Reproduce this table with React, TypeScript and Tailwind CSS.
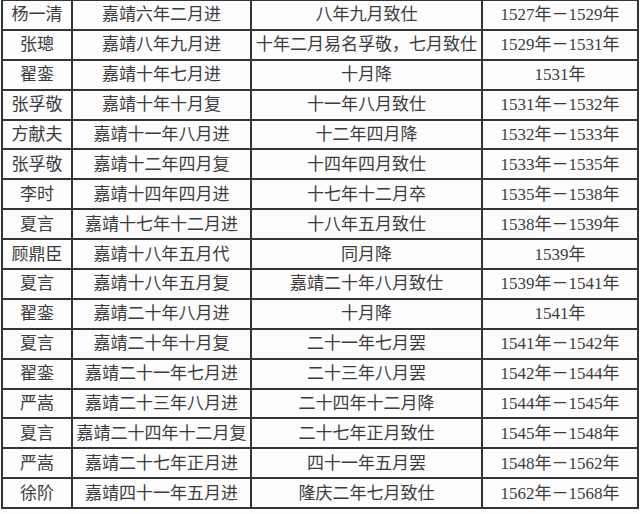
const rows: [string, string, string, string][] = [
  ['杨一清', '嘉靖六年二月进', '八年九月致仕', '1527年－1529年'],
  ['张璁', '嘉靖八年九月进', '十年二月易名孚敬，七月致仕', '1529年－1531年'],
  ['翟銮', '嘉靖十年七月进', '十月降', '1531年'],
  ['张孚敬', '嘉靖十年十月复', '十一年八月致仕', '1531年－1532年'],
  ['方献夫', '嘉靖十一年八月进', '十二年四月降', '1532年－1533年'],
  ['张孚敬', '嘉靖十二年四月复', '十四年四月致仕', '1533年－1535年'],
  ['李时', '嘉靖十四年四月进', '十七年十二月卒', '1535年－1538年'],
  ['夏言', '嘉靖十七年十二月进', '十八年五月致仕', '1538年－1539年'],
  ['顾鼎臣', '嘉靖十八年五月代', '同月降', '1539年'],
  ['夏言', '嘉靖十八年五月复', '嘉靖二十年八月致仕', '1539年－1541年'],
  ['翟銮', '嘉靖二十年八月进', '十月降', '1541年'],
  ['夏言', '嘉靖二十年十月复', '二十一年七月罢', '1541年－1542年'],
  ['翟銮', '嘉靖二十一年七月进', '二十三年八月罢', '1542年－1544年'],
  ['严嵩', '嘉靖二十三年八月进', '二十四年十二月降', '1544年－1545年'],
  ['夏言', '嘉靖二十四年十二月复', '二十七年正月致仕', '1545年－1548年'],
  ['严嵩', '嘉靖二十七年正月进', '四十一年五月罢', '1548年－1562年'],
  ['徐阶', '嘉靖四十一年五月进', '隆庆二年七月致仕', '1562年－1568年'],
]

const cell =
  'h-[29.9px] border-2 border-[#353535] p-0 text-center whitespace-nowrap'

const App = () => {
  return (
    <div className="w-[640px] h-[514px] overflow-hidden bg-[#fdfdfd]">
      <table
        className="-mt-px ml-px w-[636px] table-fixed border-collapse text-[17px] leading-none text-[#3c3c3c]"
        style={{ fontFamily: '"Liberation Serif", "Noto Sans CJK SC", serif' }}
      >
        <colgroup>
          <col className="w-[70px]" />
          <col className="w-[179px]" />
          <col className="w-[231px]" />
          <col className="w-[156px]" />
        </colgroup>
        <tbody>
          {rows.map((r, i) => (
            <tr key={i}>
              <td className={cell}>{r[0]}</td>
              <td className={cell}>{r[1]}</td>
              <td className={cell}>{r[2]}</td>
              <td className={cell}>{r[3]}</td>
            </tr>
          ))}
        </tbody>
      </table>
    </div>
  )
}

export default App
